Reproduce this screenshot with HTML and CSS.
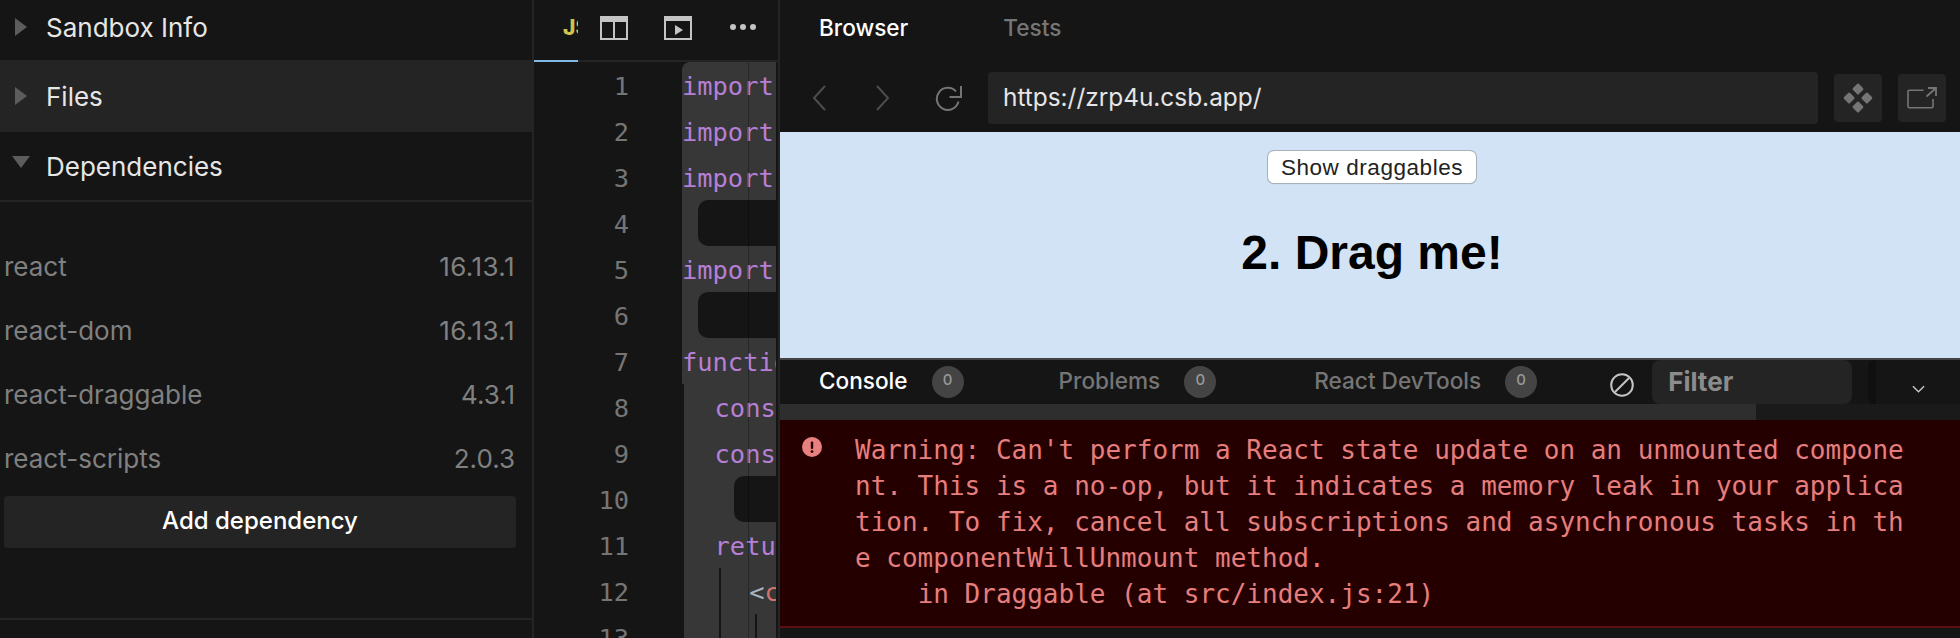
FILE: index.html
```html
<!DOCTYPE html>
<html lang="en">
<head>
<meta charset="utf-8">
<title>CodeSandbox</title>
<link rel="stylesheet" href="styles.css">
</head>
<body>
<div class="app">
  <aside class="sidebar">
    <div class="section section-first"><span class="tri"></span>Sandbox Info</div>
    <div class="section section-active"><span class="tri"></span>Files</div>
    <div class="section section-open"><span class="tri tri-down"></span>Dependencies</div>
    <ul class="deps">
      <li class="dep"><span>react</span><span class="ver-wide">16.13.1</span></li>
      <li class="dep"><span>react-dom</span><span class="ver-wide">16.13.1</span></li>
      <li class="dep"><span>react-draggable</span><span>4.3.1</span></li>
      <li class="dep"><span>react-scripts</span><span>2.0.3</span></li>
    </ul>
    <button class="add-dep">Add dependency</button>
    <div class="sidebar-rule"></div>
  </aside>

  <section class="editor">
    <header class="editor-head">
      <div class="file-tab"><span class="js">JS</span></div>
      <svg class="head-icon head-split" viewBox="0 0 28 24"><path fill="#c4c4c4" d="M0 0h28v24H0z"/><path fill="#151515" d="M2 6h11v16H2zM15 6h11v16H15z"/></svg>
      <svg class="head-icon head-play" viewBox="0 0 28 24"><path fill="#c4c4c4" d="M0 0h28v24H0z"/><path fill="#151515" d="M2 5h24v17H2z"/><path fill="#c4c4c4" d="M11 9l8 5-8 5z"/></svg>
      <svg class="head-dots" viewBox="0 0 26 6"><circle cx="3" cy="3" r="3" fill="#c4c4c4"/><circle cx="13" cy="3" r="3" fill="#c4c4c4"/><circle cx="23" cy="3" r="3" fill="#c4c4c4"/></svg>
    </header>
    <div class="code">
      <div class="row"><span class="num">1</span><div class="cell round-top"><span class="kw">import</span></div></div>
      <div class="row"><span class="num">2</span><div class="cell"><span class="kw">import</span></div></div>
      <div class="row"><span class="num">3</span><div class="cell"><span class="kw">import</span></div></div>
      <div class="row"><span class="num">4</span><div class="cell"><div class="block block-1"></div></div></div>
      <div class="row"><span class="num">5</span><div class="cell"><span class="kw">import</span></div></div>
      <div class="row"><span class="num">6</span><div class="cell"><div class="block block-1"></div></div></div>
      <div class="row"><span class="num">7</span><div class="cell"><span class="kw">function</span></div></div>
      <div class="row row-inset"><span class="num">8</span><div class="cell"><span class="kw">  const</span></div></div>
      <div class="row row-inset"><span class="num">9</span><div class="cell"><span class="kw">  const</span></div></div>
      <div class="row row-inset"><span class="num">10</span><div class="cell"><div class="block block-2"></div></div></div>
      <div class="row row-inset"><span class="num">11</span><div class="cell"><span class="kw">  return</span></div></div>
      <div class="row row-inset"><span class="num">12</span><div class="cell"><i class="guide guide-a"></i><span class="punct">    &lt;</span><span class="tag">c</span></div></div>
      <div class="row row-inset"><span class="num">13</span><div class="cell"><i class="guide guide-a"></i><i class="guide guide-b"></i></div></div>
      <i class="margin-line"></i>
    </div>
  </section>

  <main class="preview">
    <nav class="view-tabs"><span class="view-tab view-tab-on">Browser</span><span class="view-tab">Tests</span></nav>
    <div class="url-row">
      <svg class="nav nav-back" viewBox="0 0 14 26"><path d="M13 1L2 13l11 12" fill="none" stroke="#4d4d4d" stroke-width="2"/></svg>
      <svg class="nav nav-fwd" viewBox="0 0 14 26"><path d="M1 1l11 12L1 25" fill="none" stroke="#4d4d4d" stroke-width="2"/></svg>
      <svg class="nav-reload" viewBox="0 0 28 26"><path d="M23.5 16.5A11 11 0 1 1 21 6.5" fill="none" stroke="#757575" stroke-width="2"/><path d="M26 1v11H14.500" fill="none" stroke="#757575" stroke-width="2"/></svg>
      <div class="url">https://zrp4u.csb.app/</div>
      <div class="square"><svg class="diamonds" viewBox="0 0 32 32"><g fill="#757575"><rect x="11.500" y="2" width="9" height="9" rx="1.500" transform="rotate(45 16 6.500)"/><rect x="2" y="11.500" width="9" height="9" rx="1.500" transform="rotate(45 6.500 16)"/><rect x="21" y="11.500" width="9" height="9" rx="1.500" transform="rotate(45 25.500 16)"/><rect x="11.500" y="21" width="9" height="9" rx="1.500" transform="rotate(45 16 25.500)"/></g></svg></div>
      <div class="square"><svg class="external" viewBox="0 0 30 22"><path d="M16.500 3.200H2.500a1.500 1.500 0 0 0-1.500 1.500v14.600a1.500 1.500 0 0 0 1.500 1.500h22a1.500 1.500 0 0 0 1.500-1.500V12" fill="none" stroke="#757575" stroke-width="1.600"/><path d="M19.500 9.500L29 1M21 1h8v8" fill="none" stroke="#757575" stroke-width="1.800"/></svg></div>
    </div>

    <div class="frame">
      <button class="frame-btn">Show draggables</button>
      <h1 class="frame-title">2. Drag me!</h1>
    </div>

    <div class="console-head">
      <span class="ctab ctab-on">Console</span><span class="badge">0</span>
      <span class="ctab ctab-second">Problems</span><span class="badge">0</span>
      <span class="ctab ctab-third">React DevTools</span><span class="badge">0</span>
      <svg class="block-icon" viewBox="0 0 24 24"><circle cx="12" cy="12" r="10.800" fill="none" stroke="#c4c4c4" stroke-width="2"/><path d="M5 19L19 5" stroke="#c4c4c4" stroke-width="2"/></svg>
      <div class="filter">Filter</div>
      <i class="console-edge"></i>
      <svg class="chevron" viewBox="0 0 14 8"><path d="M1 1l6 6 6-6" fill="none" stroke="#c4c4c4" stroke-width="1.600"/></svg>
    </div>
    <div class="strip"><div class="strip-thumb"></div></div>
    <div class="error">
      <svg class="err-icon" viewBox="0 0 20 20"><circle cx="10" cy="10" r="10" fill="#e88080"/><rect x="8.800" y="4.500" width="2.400" height="7.500" rx="1" fill="#250000"/><circle cx="10" cy="14.600" r="1.400" fill="#250000"/></svg>
      <div class="err-text">Warning: Can't perform a React state update on an unmounted component. This is a no-op, but it indicates a memory leak in your application. To fix, cancel all subscriptions and asynchronous tasks in the componentWillUnmount method.
    in Draggable (at src/index.js:21)</div>
    </div>
  </main>
</div>
</body>
</html>
```

FILE: styles.css
```css
* { box-sizing: border-box; }
html, body { margin: 0; padding: 0; height: 100%; overflow: hidden; background: #151515; }
.app { display: flex; width: 1960px; height: 638px; overflow: hidden; font-family: Inter, "Liberation Sans", sans-serif; color: #e6e6e6; }

/* sidebar */
.sidebar { width: 534px; flex: none; border-right: 2px solid #242424; height: 638px; }
.section { display: flex; align-items: center; font-size: 26px; color: #e6e6e6; padding-left: 15px; }
.section-first { height: 60px; padding-bottom: 6px; }
.section-active { height: 72px; background: #242424; }
.section-open { height: 70px; border-bottom: 2px solid #242424; padding-left: 12px; }
.tri { width: 0; height: 0; border-style: solid; border-width: 9px 0 9px 12px; border-color: transparent transparent transparent #5c5c5c; margin-right: 19px; }
.tri-down { border-width: 12px 9px 0 9px; border-color: #5c5c5c transparent transparent transparent; margin-right: 16px; margin-bottom: 8px; }
.deps { list-style: none; margin: 0; padding: 32px 17px 0 4px; }
.dep { display: flex; justify-content: space-between; align-items: center; height: 64px; font-size: 26px; color: #808080; }
.ver-wide { letter-spacing: .4px; }
.add-dep { display: block; width: 512px; height: 52px; margin: 6px 0 0 4px; padding: 0 0 3px; background: #242424; border: 0; border-radius: 4px; color: #fff; font: 500 24px Inter, "Liberation Sans", sans-serif; }
.sidebar-rule { height: 2px; background: #242424; margin-top: 70px; }

/* editor */
.editor { width: 246px; flex: none; border-right: 2px solid #242424; height: 638px; overflow: hidden; }
.editor-head { display: flex; align-items: center; height: 62px; border-bottom: 2px solid #242424; }
.file-tab { width: 44px; height: 62px; margin-bottom: -2px; border-bottom: 2px solid #7fbbe6; padding: 14px 0 0 29px; overflow: hidden; }
.js { font: 800 21px/28px Inter, "Liberation Sans", sans-serif; color: #cfc34f; }
.head-icon { width: 28px; height: 24px; flex: none; }
.head-split { margin: 0 36px 4px 22px; }
.head-play { margin: 0 38px 4px 0; }
.head-dots { width: 26px; height: 6px; margin-bottom: 6px; }
.code { position: relative; font: 25.4px/48px "DejaVu Sans Mono", monospace; }
.row { display: flex; height: 46px; }
.num { width: 148px; flex: none; text-align: right; padding-right: 53px; color: #757575; }
.cell { position: relative; width: 94px; flex: none; background: #373737; overflow: hidden; white-space: pre; }
.row-inset .num { width: 150px; padding-right: 55px; }
.row-inset .cell { width: 92px; }
.round-top { border-top-left-radius: 8px; }
.kw { color: #b67fd6; }
.punct { color: #a9b4bf; margin-left: 4px; }
.tag { color: #d4716c; }
.block { height: 46px; background: #151515; border-radius: 10px 0 0 10px; }
.block-1 { margin-left: 16px; }
.block-2 { margin-left: 50px; }
.guide { position: absolute; top: 0; bottom: 0; width: 2px; background: #151515; }
.guide-a { left: 35px; }
.guide-b { left: 71px; }
.margin-line { position: absolute; left: 214px; top: 0; bottom: 0; width: 1px; background: rgba(0,0,0,.28); height: 576px; }

/* preview */
.preview { flex: 1; min-width: 0; }
.view-tabs { display: flex; height: 56px; align-items: center; padding: 0 0 2px 39px; }
.view-tab { font-size: 22.6px; font-weight: 500; color: #757575; margin-right: 95px; }
.view-tab-on { color: #fff; }
.url-row { display: flex; align-items: center; height: 76px; padding: 16px 0 8px; }
.nav { width: 14px; height: 26px; flex: none; }
.nav-back { margin-left: 32px; }
.nav-fwd { margin-left: 50px; }
.nav-reload { width: 28px; height: 26px; flex: none; margin-left: 45px; }
.url { width: 830px; height: 52px; margin-left: 25px; flex: none; background: #242424; border-radius: 4px; padding-left: 15px; font-size: 24.4px; line-height: 50px; color: #e6e6e6; }
.square { display: flex; align-items: center; justify-content: center; width: 48px; height: 48px; margin-left: 16px; background: #242424; border-radius: 4px; flex: none; }
.diamonds { width: 30px; height: 30px; }
.external { width: 30px; height: 22px; }

.frame { height: 226px; background: #d2e3f5; text-align: center; padding: 19px 0 0 4px; }
.frame-btn { display: block; width: 208px; height: 32px; margin: 0 auto; padding: 2px 0 0; background: #fff; border: 0; border-radius: 6px; box-shadow: 0 0 0 1px #a8b0ba, 0 1px 1px rgba(0,0,0,.2); color: #222; font: 22.5px "Liberation Sans", Arial, sans-serif; letter-spacing: .55px; }
.frame-title { margin: 42px 0 0; font: 700 48px/56px "Liberation Sans", Arial, sans-serif; color: #000; }

.console-head { display: flex; align-items: center; height: 46px; border-top: 2px solid #444; background: #151515; font-size: 22.6px; font-weight: 500; }
.ctab { color: #757575; padding-bottom: 3px; }
.ctab-on { color: #fff; margin-left: 39px; }
.ctab-second { margin-left: 95px; }
.ctab-third { margin-left: 98px; }
.badge { width: 32px; height: 32px; margin-left: 24px; border-radius: 50%; background: #444; color: #999; font-size: 15px; line-height: 28px; text-align: center; flex: none; }
.block-icon { width: 24px; height: 24px; margin: 6px 0 0 73px; flex: none; }
.filter { width: 200px; height: 44px; margin-left: 18px; background: #242424; border-radius: 8px; padding-left: 16px; color: #8c8c8c; font-size: 26px; font-weight: 700; line-height: 44px; flex: none; }
.console-edge { width: 8px; height: 44px; margin-left: 16px; background: #0f0f0f; border-radius: 6px 0 0 6px; flex: none; }
.chevron { width: 13px; height: 8px; margin: 14px 0 0 36px; flex: none; }
.strip { height: 16px; background: #1a1a1a; }
.strip-thumb { width: 976px; height: 16px; background: #2e2e2e; }
.error { display: flex; height: 208px; background: #250000; border-bottom: 2px solid #5c1010; padding: 17px 0 0 22px; font: 26px/36.100px "DejaVu Sans Mono", monospace; color: #e67e7e; }
.err-icon { width: 20px; height: 20px; flex: none; }
.err-text { width: 1050px; margin: -5px 0 0 33px; white-space: pre-wrap; word-break: break-all; }
```
